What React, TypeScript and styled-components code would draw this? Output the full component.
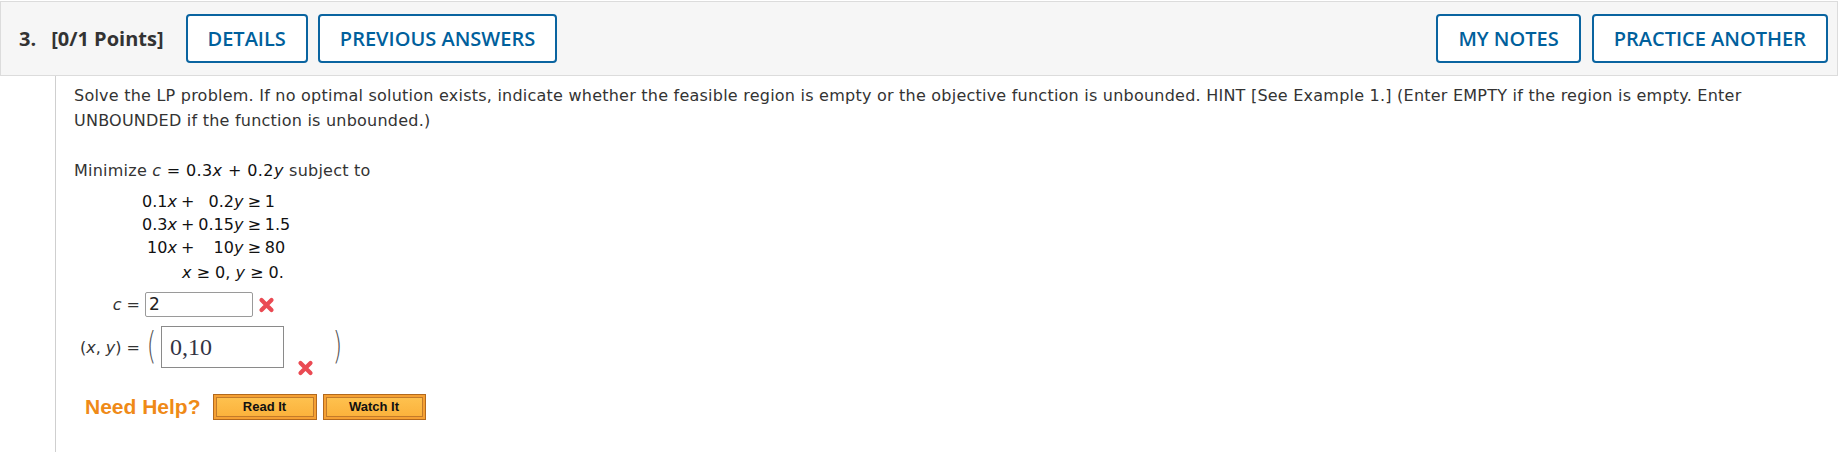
import React from "react";
import styled, { createGlobalStyle } from "styled-components";

const GlobalStyle = createGlobalStyle`
  html, body { margin: 0; padding: 0; background: #fff; }
  body { width: 1840px; height: 452px; overflow: hidden; }
`;

const Question = styled.div`
  padding-top: 1px;
  width: 1838px;
`;

const Header = styled.header`
  height: 75px;
  box-sizing: border-box;
  display: flex;
  align-items: center;
  background: #f6f6f6;
  border: 1px solid #dcdcdc;
  padding: 0 9px 0 18px;
`;

const Points = styled.div`
  display: flex;
  gap: 15px;
  font-family: "Open Sans", sans-serif;
  font-weight: 700;
  font-size: 20px;
  color: #333;
  margin-right: 22px;
`;

const ButtonGroup = styled.div<{ $gap: number }>`
  display: flex;
  gap: ${(p) => p.$gap}px;
`;

const Spacer = styled.div`
  flex: 1;
`;

const HeaderButton = styled.button`
  height: 49px;
  box-sizing: border-box;
  padding: 0 20px;
  border: 2px solid #0a64a0;
  border-radius: 4px;
  background: #fff;
  color: #00609c;
  font-family: "Open Sans", sans-serif;
  font-weight: 600;
  font-size: 20px;
`;

const Body = styled.div`
  margin-left: 55px;
  border-left: 1px solid #cfcfcf;
  height: 376px;
  padding: 7px 0 0 18px;
  box-sizing: border-box;
  font-family: Verdana, "DejaVu Sans", sans-serif;
  color: #333;
`;

const Prompt = styled.p`
  margin: 0;
  width: 1720px;
  font-size: 16px;
  letter-spacing: 0.23px;
  line-height: 25px;
`;

const Math = styled.span`
  color: #111;
  letter-spacing: 0.4px;
`;

const Var = styled.i`
  font-style: italic;
`;

const Constraints = styled.div`
  display: grid;
  grid-template-columns: auto auto auto auto auto;
  justify-content: start;
  column-gap: 4px;
  margin: 7px 0 0 68px;
  font-size: 16px;
  line-height: 23px;
  color: #111;
`;

const Cell = styled.span<{ $align?: string }>`
  text-align: ${(p) => p.$align || "left"};
`;

const LastRow = styled.span`
  grid-column: 1 / -1;
  padding-left: 40px;
  margin-top: 2px;
`;

const Answers = styled.div`
  display: grid;
  grid-template-columns: 66px auto;
  column-gap: 5px;
  row-gap: 9px;
  margin-top: 8px;
  align-items: center;
  font-size: 16px;
`;

const Label = styled.span`
  text-align: right;
  color: #333;
  white-space: nowrap;
`;

const Field = styled.div`
  display: flex;
  align-items: center;
`;

const SmallInput = styled.div`
  width: 108px;
  height: 25px;
  box-sizing: border-box;
  border: 1px solid #9a9a9a;
  border-radius: 2px;
  padding: 0 3px;
  font-size: 17px;
  line-height: 23px;
  color: #222;
`;

const Paren = styled.span<{ $ml?: number }>`
  display: inline-block;
  width: 10px;
  margin-left: ${(p) => p.$ml || 0}px;
  text-align: center;
  font-family: "DejaVu Sans", sans-serif;
  font-weight: 200;
  font-size: 37px;
  line-height: 40px;
  color: #555;
  transform: scaleX(0.65);
`;

const BigInput = styled.div`
  width: 123px;
  height: 42px;
  box-sizing: border-box;
  border: 1px solid #8a8a8a;
  margin-left: 6px;
  padding: 0 8px;
  font-family: "Liberation Serif", serif;
  font-size: 24px;
  line-height: 40px;
  color: #334;
`;

const Cross = styled.svg<{ $ml: number; $low?: boolean }>`
  width: 17px;
  height: 16px;
  margin-left: ${(p) => p.$ml}px;
  flex: none;
  ${(p) => (p.$low ? "align-self: flex-end; margin-bottom: -8px;" : "")}
`;

const HelpRow = styled.div`
  display: flex;
  align-items: center;
  gap: 6px;
  margin: 26px 0 0 11px;
`;

const HelpText = styled.span`
  font-family: "Liberation Sans", Arial, sans-serif;
  font-weight: 700;
  font-size: 21px;
  color: #ef8a17;
  margin-right: 6px;
`;

const HelpButton = styled.button<{ $w: number }>`
  width: ${(p) => p.$w}px;
  height: 26px;
  box-sizing: border-box;
  padding: 2px;
  border: 1px solid #b3691c;
  background: #f5a033;
  cursor: pointer;
`;

const HelpInner = styled.span`
  display: block;
  height: 100%;
  box-sizing: border-box;
  border: 1px solid #c27a2a;
  background: linear-gradient(#fec14e, #fbb23c);
  font-family: "Liberation Sans", Arial, sans-serif;
  font-weight: 700;
  font-size: 13px;
  line-height: 18px;
  color: #111;
`;

const XIcon = ({ ml, low }: { ml: number; low?: boolean }) => (
  <Cross $ml={ml} $low={low} viewBox="0 0 17 16">
    <path d="M3.5 3 L13.5 13 M13.5 3 L3.5 13" stroke="#ea4a53" strokeWidth="4.2" strokeLinecap="round" />
  </Cross>
);

export default function App() {
  return (
    <>
      <GlobalStyle />
      <Question>
        <Header>
          <Points>
            <span>3.</span>
            <span>[0/1 Points]</span>
          </Points>
          <ButtonGroup $gap={10}>
            <HeaderButton>DETAILS</HeaderButton>
            <HeaderButton>PREVIOUS ANSWERS</HeaderButton>
          </ButtonGroup>
          <Spacer />
          <ButtonGroup $gap={11}>
            <HeaderButton>MY NOTES</HeaderButton>
            <HeaderButton>PRACTICE ANOTHER</HeaderButton>
          </ButtonGroup>
        </Header>
        <Body>
          <Prompt>
            Solve the LP problem. If no optimal solution exists, indicate whether the feasible region is empty or the
            objective function is unbounded. HINT [See Example 1.] (Enter EMPTY if the region is empty. Enter UNBOUNDED
            if the function is unbounded.)
            <br />
            <br />
            Minimize <Var>c</Var> <Math>= 0.3<Var>x</Var> + 0.2<Var>y</Var></Math> subject to
          </Prompt>
          <Constraints>
            <Cell $align="right">0.1<Var>x</Var></Cell>
            <Cell>+</Cell>
            <Cell $align="right">0.2<Var>y</Var></Cell>
            <Cell>≥</Cell>
            <Cell>1</Cell>
            <Cell $align="right">0.3<Var>x</Var></Cell>
            <Cell>+</Cell>
            <Cell $align="right">0.15<Var>y</Var></Cell>
            <Cell>≥</Cell>
            <Cell>1.5</Cell>
            <Cell $align="right">10<Var>x</Var></Cell>
            <Cell>+</Cell>
            <Cell $align="right">10<Var>y</Var></Cell>
            <Cell>≥</Cell>
            <Cell>80</Cell>
            <LastRow>
              <Var>x</Var> ≥ 0, <Var>y</Var> ≥ 0.
            </LastRow>
          </Constraints>
          <Answers>
            <Label>
              <Var>c</Var> =
            </Label>
            <Field>
              <SmallInput>2</SmallInput>
              <XIcon ml={5} />
            </Field>
            <Label>
              (<Var>x</Var>, <Var>y</Var>) =
            </Label>
            <Field>
              <Paren>(</Paren>
              <BigInput>0,10</BigInput>
              <XIcon ml={13} low />
              <Paren $ml={17}>)</Paren>
            </Field>
          </Answers>
          <HelpRow>
            <HelpText>Need Help?</HelpText>
            <HelpButton $w={104}>
              <HelpInner>Read It</HelpInner>
            </HelpButton>
            <HelpButton $w={103}>
              <HelpInner>Watch It</HelpInner>
            </HelpButton>
          </HelpRow>
        </Body>
      </Question>
    </>
  );
}
